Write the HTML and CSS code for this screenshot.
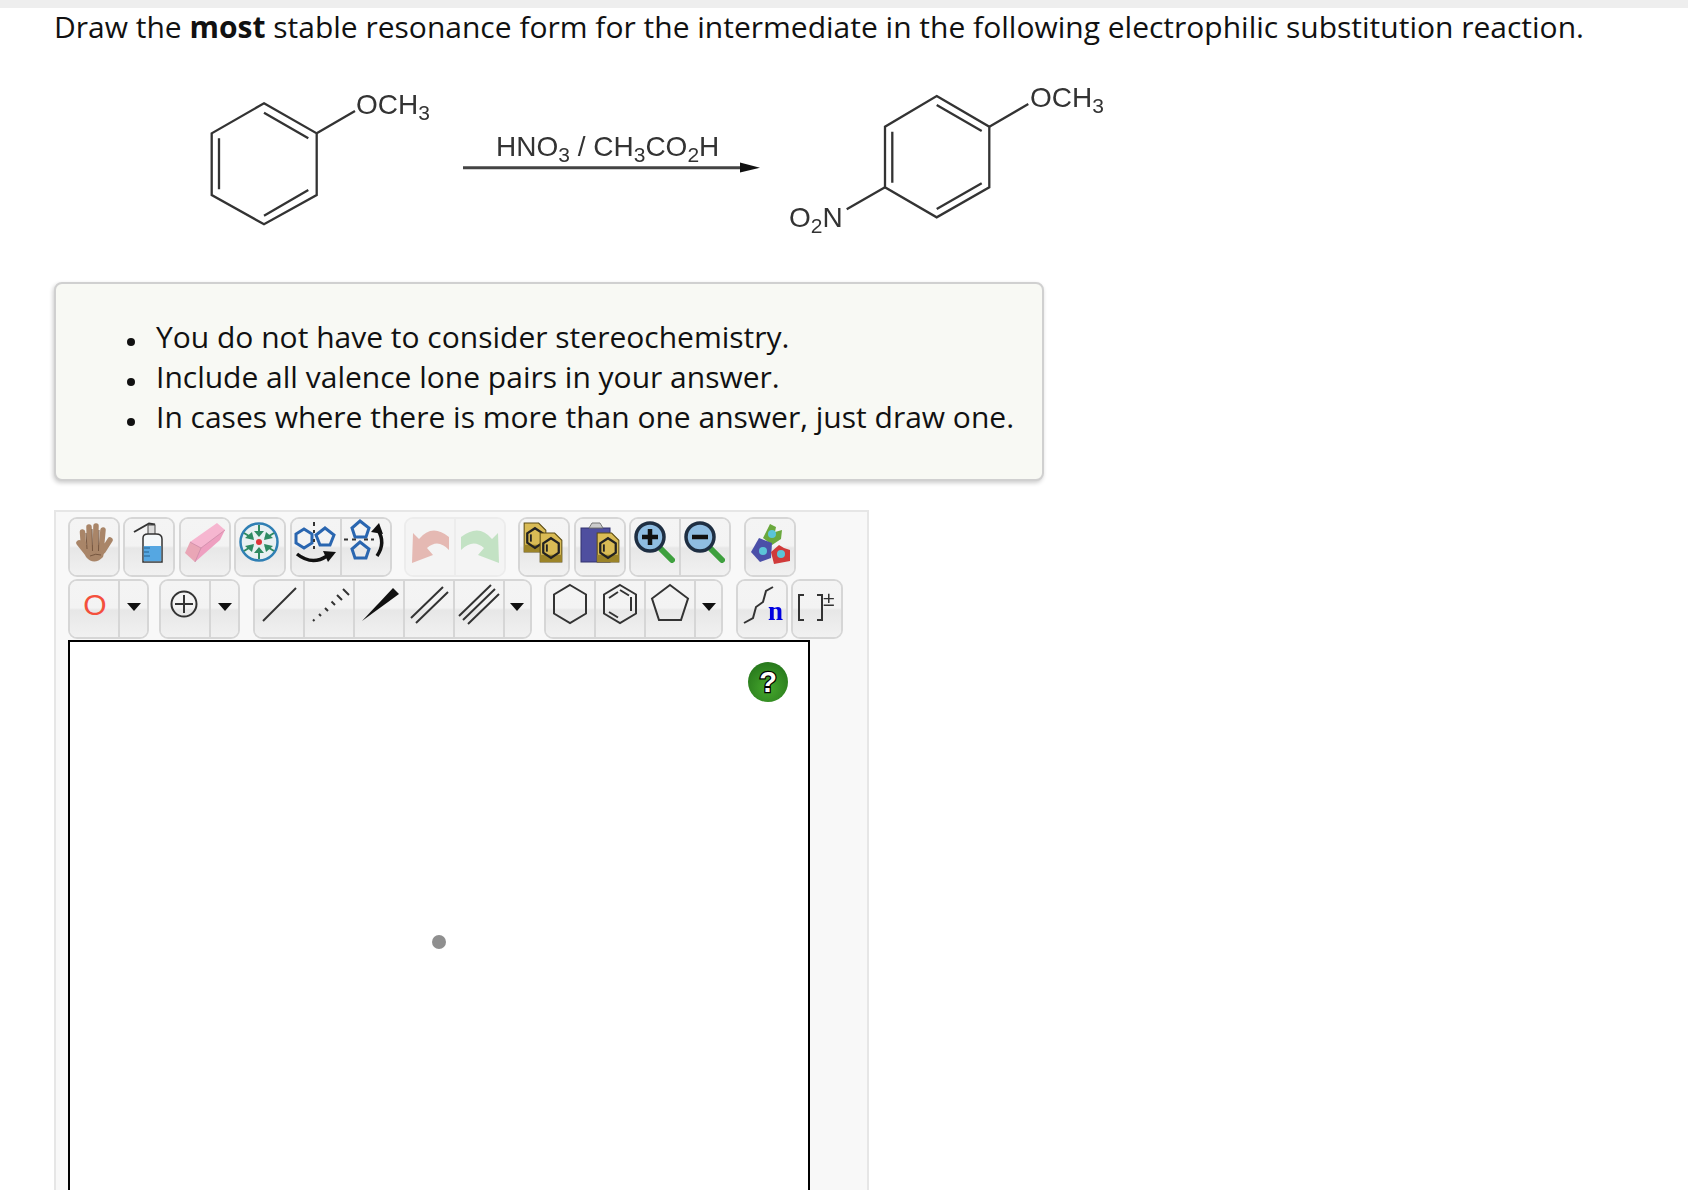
FILE: index.html
```html
<!DOCTYPE html>
<html lang="en">
<head>
  <meta charset="UTF-8">
  <title>Electrophilic substitution question</title>
  <link rel="stylesheet" href="styles.css">
</head>
<body>
  <div class="top-bar"></div>
  <div class="question">
    <p class="prompt">Draw the <b>most</b> stable resonance form for the intermediate in the following electrophilic substitution reaction.</p>

    <svg class="scheme" viewBox="180 70 1000 180" width="1000" height="180">
      <g class="bond">
        <path d="M264 103.3 316.7 133.3V195L264 224.3 211.7 195V133.3Z"/>
        <path d="M264 112.7 308.3 138.3M219 138.3V189.3M264 215.7 308.3 190M316.7 133.3 355 111"/>
        <path d="M936.7 96 989.3 126.7V187.3L936.7 217.3 885 187.3V126.7Z"/>
        <path d="M936.7 105 981.7 131M892.3 131.7V182.7M936.7 209 981.7 183.3M989.3 126.7 1028.3 104M885 187.3 846.7 209.3"/>
      </g>
      <path class="arrow-line" d="M463 167.7H745"/>
      <path class="arrow-head" d="M740 162.5 760 167.7 740 172.5Z"/>
      <text class="chem" x="356" y="114">OCH<tspan class="sub" dy="6">3</tspan></text>
      <text class="chem" x="1030" y="106.5">OCH<tspan class="sub" dy="6">3</tspan></text>
      <text class="chem" x="789" y="227">O<tspan class="sub" dy="6">2</tspan><tspan dy="-6">N</tspan></text>
      <text class="chem" x="496" y="155.5">HNO<tspan class="sub" dy="6">3</tspan><tspan dy="-6"> / CH</tspan><tspan class="sub" dy="6">3</tspan><tspan dy="-6">CO</tspan><tspan class="sub" dy="6">2</tspan><tspan dy="-6">H</tspan></text>
    </svg>

    <div class="note">
      <ul>
        <li>You do not have to consider stereochemistry.</li>
        <li>Include all valence lone pairs in your answer.</li>
        <li>In cases where there is more than one answer, just draw one.</li>
      </ul>
    </div>

    <div class="sketcher">
      <div class="tool-row">
        <div class="group">
          <button class="tool">
            <svg viewBox="0 0 48 56">
              <path d="M11 26H36L33 38Q24 47 16 38Z" fill="#a98568"/>
              <g class="hand">
                <path d="M9 24 17 34M13.500 27 12.500 13M19.500 25 19 8M25.500 25 26 7M31.500 27 33 11M33 32 40 21"/>
              </g>
              <path d="M16 14 17 30M22 10 22.500 32M29 11 28.500 32M20 37Q26 34 31 36" stroke="#76563f" fill="none"/>
            </svg>
          </button>
        </div>
        <div class="group">
          <button class="tool">
            <svg viewBox="0 0 48 56">
              <path d="M9 13 24 4.500 30 5.500" stroke="#333" stroke-width="2" fill="none"/>
              <rect x="23" y="6" width="7" height="10" fill="#ddd" stroke="#444"/>
              <path d="M18 19Q18 15 23 15H31Q37 15 37 20V43H18Z" fill="#f4f8fa" stroke="#333" stroke-width="1.500"/>
              <path d="M18.800 27H36.200V42.200H18.800Z" fill="#55a7e2"/>
              <path d="M19 29H25M19 33H24M19 37H25" stroke="#25618f"/>
            </svg>
          </button>
        </div>
        <div class="group">
          <button class="tool">
            <svg viewBox="0 0 48 56">
              <path d="M9 23 36 4 44 11 20 29Z" fill="#f6b6d0"/>
              <path d="M20 29 44 11 39 21 14 43Z" fill="#ee9fc0"/>
              <path d="M4 34 9 23 20 29 14 43Z" fill="#e9a6b6"/>
              <path d="M9 23 20 29 44 11M20 29 14 43" stroke="#c77f9f" fill="none" stroke-width="0.700"/>
            </svg>
          </button>
        </div>
        <div class="group">
          <button class="tool">
            <svg viewBox="0 0 48 56">
              <circle cx="23" cy="23" r="18.500" fill="#e8f0f2" stroke="#2f7fb4" stroke-width="2.500"/>
              <path d="M23 6V16M23 40V30M8 14 17 19.500M38 32 29 26.500M38 14 29 19.500M8 32 17 26.500" stroke="#2e8a62" stroke-width="2"/>
              <path d="M18 12H28L23 18ZM18 34H28L23 28ZM9 19 16 13 18 21ZM37 27 30 33 28 25ZM37 19 30 13 28 21ZM9 27 16 33 18 25Z" fill="#2e8a62"/>
              <circle cx="23" cy="23" r="3" fill="#e0353a"/>
            </svg>
          </button>
        </div>
        <div class="group">
          <button class="tool">
            <svg viewBox="0 0 48 56">
              <path d="M12 10 20 15V24L12 29 4 24V15ZM33 9 42 16 38 26H28L24 16Z" class="ring-blue"/>
              <path d="M22 3V7M22 11V14M22 20V23M22 27V30" stroke="#333" stroke-width="2"/>
              <path d="M5 35Q20 47 35 37" stroke="#111" stroke-width="3.500" fill="none"/>
              <path d="M31 32 44 33 36 43Z" fill="#111"/>
            </svg>
          </button>
          <button class="tool">
            <svg viewBox="0 0 48 56">
              <path d="M18 2 27 9 24 18H13L10 9ZM18 23 27 30 24 39H13L10 30Z" class="ring-blue"/>
              <path d="M2 20.500H6M10 20.500H14M22 20.500H26M29 20.500H32" stroke="#333" stroke-width="2"/>
              <path d="M36 11Q44 24 35 37" stroke="#111" stroke-width="3.500" fill="none"/>
              <path d="M29 13 37 4 41 15Z" fill="#111"/>
            </svg>
          </button>
        </div>
        <div class="group group-off sep">
          <button class="tool">
            <svg viewBox="0 0 48 56">
              <path d="M6 44 7 14 13 20Q26 4 43 18V31Q32 19 21 29L27 36Z" fill="#e5b9b3"/>
            </svg>
          </button>
          <button class="tool">
            <svg viewBox="0 0 48 56">
              <path d="M43 44 42 14 36 20Q23 4 5 18V31Q17 19 28 29L22 36Z" fill="#c3e2c4"/>
            </svg>
          </button>
        </div>
        <div class="group sep">
          <button class="tool">
            <svg viewBox="0 0 48 56">
              <use href="#doc" x="3" y="3" width="24" height="31"/>
              <use href="#doc" x="19" y="13" width="24" height="31"/>
            </svg>
          </button>
        </div>
        <div class="group">
          <button class="tool">
            <svg viewBox="0 0 48 56">
              <rect x="5" y="9" width="29" height="34" fill="#4f4f9f" stroke="#33336f"/>
              <path d="M13 9 16 4H24L27 9Z" fill="#ccc" stroke="#777"/>
              <use href="#doc" x="20" y="13" width="24" height="31"/>
            </svg>
          </button>
        </div>
        <div class="group">
          <button class="tool">
            <svg viewBox="0 0 48 56">
              <path d="M30 30 41 41" class="lens-handle"/>
              <circle cx="19" cy="18" r="14" class="lens"/>
              <path d="M11 18H27M19 10V26" stroke="#111" stroke-width="4.500"/>
            </svg>
          </button>
          <button class="tool">
            <svg viewBox="0 0 48 56">
              <path d="M30 30 41 41" class="lens-handle"/>
              <circle cx="19" cy="18" r="14" class="lens"/>
              <path d="M11 18H27" stroke="#111" stroke-width="4.500"/>
            </svg>
          </button>
        </div>
        <div class="group sep">
          <button class="tool">
            <svg viewBox="0 0 48 56">
              <path d="M17 19 24 5 30 8 29 13 36 11 35 20 26 26Z" fill="#6aa83d"/>
              <path d="M5 33 13 19 26 24 25 39 14 43Z" fill="#4b4fa8"/>
              <path d="M25 33 33 26 38 29 44 31 44 42 28 45Z" fill="#d03a3a"/>
              <circle cx="26" cy="15" r="4" fill="#5bc4d8"/>
              <circle cx="17" cy="32" r="4" fill="#5bc4d8"/>
              <circle cx="35" cy="35" r="4" fill="#5bc4d8"/>
            </svg>
          </button>
        </div>
      </div>

      <div class="tool-row">
        <div class="group">
          <button class="tool atom">O</button>
          <button class="tool caret-btn caret-wide"><span class="caret"></span></button>
        </div>
        <div class="group sep-small">
          <button class="tool">
            <svg viewBox="0 0 48 56">
              <circle cx="23" cy="23" r="12.500" class="line"/>
              <path d="M23 14V32M14 23H32" class="line"/>
            </svg>
          </button>
          <button class="tool caret-btn caret-wide"><span class="caret"></span></button>
        </div>
        <div class="group sep">
          <button class="tool">
            <svg viewBox="0 0 48 56"><path d="M8 40 41 7" class="line"/></svg>
          </button>
          <button class="tool">
            <svg viewBox="0 0 48 56">
              <path d="M8 38.500 9.500 40M14 33 16 35M20 27 23 30M26.500 20.500 30 24M32 14 37 19M38 8 44 14" class="line"/>
            </svg>
          </button>
          <button class="tool">
            <svg viewBox="0 0 48 56"><path d="M7 40 38 7 44 13Z" fill="#111"/></svg>
          </button>
          <button class="tool">
            <svg viewBox="0 0 48 56"><path d="M6 37 38 6M11 42 43 11" class="line"/></svg>
          </button>
          <button class="tool">
            <svg viewBox="0 0 48 56"><path d="M4 35 36 4M8 39 40 8M13 43 44 13" class="line"/></svg>
          </button>
          <button class="tool caret-btn"><span class="caret"></span></button>
        </div>
        <div class="group sep">
          <button class="tool">
            <svg viewBox="0 0 48 56"><path d="M24 4 40 13.500V32.500L24 42 8 32.500V13.500Z" class="line"/></svg>
          </button>
          <button class="tool">
            <svg viewBox="0 0 48 56">
              <path d="M24 4 40 13.500V32.500L24 42 8 32.500V13.500Z" class="line"/>
              <path d="M35 16V30M24 9 33 14.500M13 31 22 36.500M13 17 22 11" class="line" />
            </svg>
          </button>
          <button class="tool">
            <svg viewBox="0 0 48 56"><path d="M24 4 42 17.500 35 39H13L6 17.500Z" class="line"/></svg>
          </button>
          <button class="tool caret-btn"><span class="caret"></span></button>
        </div>
        <div class="group sep">
          <button class="tool">
            <svg viewBox="0 0 48 56">
              <path d="M6 42 15 37 18 26 25 21 28 10 35 6" class="line"/>
              <text x="30" y="39" class="poly-n">n</text>
            </svg>
          </button>
        </div>
        <div class="group">
          <button class="tool">
            <svg viewBox="0 0 48 56">
              <path d="M11 14H6V39H11M24 14H29V39H24" class="line"/>
              <text x="30" y="25" class="charge">±</text>
            </svg>
          </button>
        </div>
      </div>

      <div class="canvas">
        <div class="canvas-dot"></div>
        <div class="help">?</div>
      </div>
    </div>
  </div>

  <svg class="defs" width="0" height="0">
    <symbol id="doc" viewBox="0 0 23 30">
      <path d="M1 1H15L22 8V29H1Z" fill="#d9bb55" stroke="#5c4c14"/>
      <path d="M1 22H22V29H1Z" fill="#9c8428"/>
      <path d="M11.500 6 19 11V20L11.500 25 4 20V11Z" fill="none" stroke="#222" stroke-width="2.200"/>
      <path d="M7.500 12V19" stroke="#222" stroke-width="1.800"/>
    </symbol>
  </svg>
</body>
</html>
```

FILE: styles.css
```css
html, body {
  margin: 0;
  height: 1190px;
  overflow: hidden;
  background: #fff;
  font-family: "Open Sans", sans-serif;
  color: #111;
}
.top-bar {
  height: 8px;
  background: #eeeeee;
}
.question {
  padding-left: 54px;
}
.prompt {
  margin: -1px 0 0;
  height: 63px;
  font-size: 30px;
  line-height: 40px;
}
.scheme {
  display: block;
  margin-left: 126px;
  filter: blur(0.5px);
}
.bond path {
  fill: none;
  stroke: #333;
  stroke-width: 2.3;
}
.arrow-line {
  stroke: #444;
  stroke-width: 3;
}
.arrow-head {
  fill: #111;
}
.chem {
  font-family: "Liberation Sans", sans-serif;
  font-size: 28px;
  fill: #333;
}
.sub {
  font-size: 21px;
}
.note {
  box-sizing: border-box;
  width: 990px;
  height: 199px;
  margin-top: 32px;
  padding: 33px 0 0 1px;
  background: #f8f9f4;
  border: 2px solid #d0d0d0;
  border-radius: 8px;
  box-shadow: -1px 2px 4px rgba(0, 0, 0, 0.2);
}
.note ul {
  margin: 0;
  padding-left: 99px;
  list-style: none;
  font-size: 30px;
  line-height: 40px;
}
.note li::before {
  content: "";
  display: inline-block;
  width: 8px;
  height: 8px;
  margin: 0 21px 0 -29px;
  vertical-align: 2px;
  border-radius: 50%;
  background: #111;
}
.sketcher {
  box-sizing: border-box;
  width: 815px;
  height: 800px;
  margin: 29px 0 0;
  padding: 5px 0 0 12px;
  background: #f8f8f8;
  border: 2px solid #e6e6e6;
}
.tool-row {
  display: flex;
  gap: 3.4px;
  height: 60px;
  margin-bottom: 2px;
}
.group {
  display: flex;
  border: 2px solid #d6d6d6;
  border-radius: 9px;
  overflow: hidden;
}
.group-off {
  border-color: #ececec;
}
.sep {
  margin-left: 9px;
}
.sep-small {
  margin-left: 7px;
}
.tool {
  width: 48px;
  padding: 0;
  border: none;
  background: linear-gradient(#f4f4f4 0, #f3f3f3 48%, #e7e7e7 52%, #f1f1f1 100%);
}
.tool + .tool {
  box-sizing: content-box;
  border-left: 2px solid #d6d6d6;
}
.group-off .tool {
  background: #f4f4f4;
}
.group-off .tool + .tool {
  border-left-color: #ececec;
}
.tool svg {
  display: block;
  width: 48px;
  height: 56px;
  filter: blur(0.4px);
}
.atom {
  padding-bottom: 8px;
  padding-left: 2px;
  font-family: "Liberation Sans", sans-serif;
  font-size: 30px;
  color: #f4503c;
}
.caret-btn {
  width: 25px;
}
.caret-wide {
  width: 27px;
}
.caret {
  display: block;
  width: 0;
  margin: 0 auto 4px;
  border-top: 8px solid #111;
  border-left: 7px solid transparent;
  border-right: 7px solid transparent;
}
.hand path {
  fill: none;
  stroke: #a98568;
  stroke-width: 5.5;
  stroke-linecap: round;
}
.ring-blue {
  fill: none;
  stroke: #2a66b0;
  stroke-width: 3;
}
.lens {
  fill: #8fbde2;
  stroke: #1e2e42;
  stroke-width: 3.5;
}
.lens-handle {
  stroke: #3ea03e;
  stroke-width: 6;
  stroke-linecap: round;
}
.line {
  fill: none;
  stroke: #333;
  stroke-width: 2;
}
.poly-n {
  font-family: "Liberation Serif", serif;
  font-weight: bold;
  font-size: 27px;
  fill: #0000e0;
}
.charge {
  font-family: "Liberation Sans", sans-serif;
  font-size: 21px;
  fill: #333;
}
.canvas {
  position: relative;
  box-sizing: border-box;
  width: 742px;
  height: 700px;
  margin-top: -1px;
  background: #fff;
  border: 2px solid #000;
}
.canvas-dot {
  position: absolute;
  left: 362px;
  top: 293px;
  width: 14px;
  height: 14px;
  border-radius: 50%;
  background: #8f8f8f;
}
.help {
  position: absolute;
  left: 678px;
  top: 20px;
  width: 40px;
  height: 40px;
  border-radius: 50%;
  background: radial-gradient(circle at 50% 65%, #46a82c, #1f6b18);
  font-family: "Liberation Sans", sans-serif;
  font-weight: bold;
  font-size: 29px;
  line-height: 40px;
  text-align: center;
  color: #fff;
  -webkit-text-stroke: 2.5px #000;
  paint-order: stroke fill;
}
.defs {
  position: absolute;
}
```
